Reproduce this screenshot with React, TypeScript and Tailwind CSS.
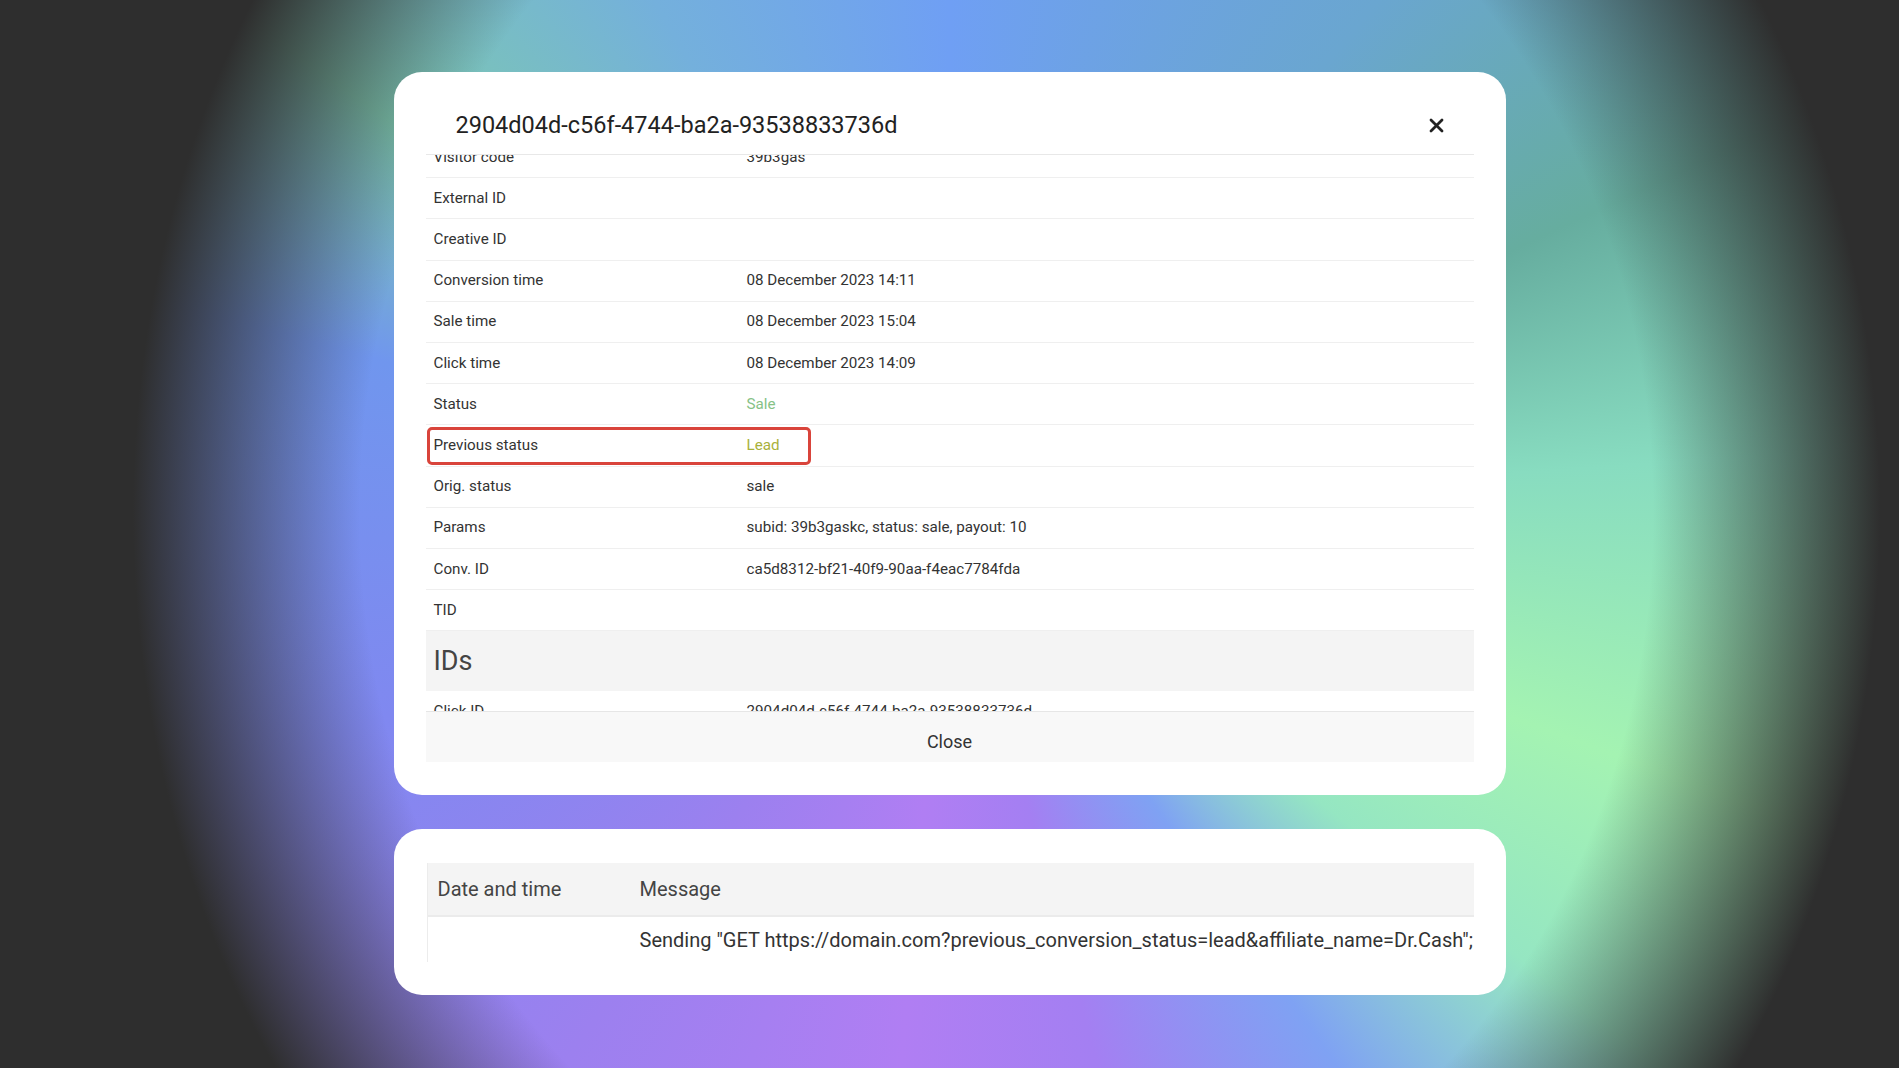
import React from 'react';

type Row = {
  label: string;
  value?: string;
  tone?: 'sale' | 'lead';
  marked?: boolean;
};

const rows: Row[] = [
  { label: 'Visitor code', value: '39b3gas' },
  { label: 'External ID' },
  { label: 'Creative ID' },
  { label: 'Conversion time', value: '08 December 2023 14:11' },
  { label: 'Sale time', value: '08 December 2023 15:04' },
  { label: 'Click time', value: '08 December 2023 14:09' },
  { label: 'Status', value: 'Sale', tone: 'sale' },
  { label: 'Previous status', value: 'Lead', tone: 'lead', marked: true },
  { label: 'Orig. status', value: 'sale' },
  { label: 'Params', value: 'subid: 39b3gaskc, status: sale, payout: 10' },
  { label: 'Conv. ID', value: 'ca5d8312-bf21-40f9-90aa-f4eac7784fda' },
  { label: 'TID' },
];

function DetailRow({ row }: { row: Row }) {
  const toneClass =
    row.tone === 'sale' ? 'text-[#86c286]' : row.tone === 'lead' ? 'text-[#a9b13b]' : 'text-[#333]';

  return (
    <div className="relative flex items-center h-[41.2px] border-b border-[#efefef] text-[15.2px] text-[#333]">
      <div className="w-[321px] shrink-0 pl-[8px]">{row.label}</div>
      <div className={toneClass}>{row.value}</div>
      {/* highlight frame around the changed status */}
      {row.marked && (
        <div className="absolute left-[1px] top-[2px] w-[384px] h-[38px] border-[3px] border-[#d9443b] rounded-[5px]" />
      )}
    </div>
  );
}

function CloseIcon() {
  return (
    <svg width="15" height="15" viewBox="0 0 15 15" fill="none">
      <path d="M2 2 L13 13 M13 2 L2 13" stroke="#222" strokeWidth="2.8" strokeLinecap="round" />
    </svg>
  );
}

export default function App() {
  return (
    <div className="w-[1899px] h-[1068px] overflow-hidden bg-[#2e2e2e] bg-[radial-gradient(ellipse_46%_95%_at_53%_48%,transparent_74%,#2e2e2e_100%),conic-gradient(from_0deg_at_50%_48%,#6f9ff4_0deg,#6aa6d0_40deg,#66ad9f_65deg,#88dcc0_86deg,#a4f3b2_110deg,#95e6c2_128deg,#7fa2f3_145deg,#a47ff2_165deg,#b07ef3_185deg,#9c80ef_215deg,#8088f0_250deg,#7096ee_285deg,#7cc8b0_305deg,#74b0dc_330deg,#6f9ff4_360deg)] font-['Roboto',sans-serif]">
      <div className="flex flex-col items-center pt-[72px]">
        {/* Conversion details modal */}
        <div className="w-[1112px] bg-white rounded-[28px] px-[32px] pb-[33px]">
          <div className="flex items-center justify-between pt-[40px] pb-[16px] border-b border-[#e8e8e8]">
            <h2 className="pl-[30px] text-[23.5px] leading-[26px] text-[#222]">2904d04d-c56f-4744-ba2a-93538833736d</h2>
            <div className="pr-[30px]">
              <CloseIcon />
            </div>
          </div>

          <div className="h-[556px] overflow-hidden">
            <div className="-mt-[18px]">
              {rows.map((row) => (
                <DetailRow key={row.label} row={row} />
              ))}
              <div className="h-[60px] flex items-center bg-[#f4f4f4] pl-[8px] text-[27px] text-[#444]">IDs</div>
              <div className="flex items-center h-[41.2px] text-[15.2px] text-[#333]">
                <div className="w-[321px] shrink-0 pl-[8px]">Click ID</div>
                <div>2904d04d-c56f-4744-ba2a-93538833736d</div>
              </div>
            </div>
          </div>

          <div className="h-[51px] flex items-center justify-center pt-[8px] bg-[#f8f8f8] border-t border-[#e6e6e6] text-[18px] text-[#333]">
            Close
          </div>
        </div>

        {/* Postback log */}
        <div className="w-[1112px] h-[166px] mt-[34px] bg-white rounded-[28px] px-[32px] pt-[34px] overflow-hidden">
          <div className="ml-[1px] border-l border-[#ececec] overflow-hidden">
            <div className="flex items-center h-[54px] bg-[#f4f4f4] border-b-2 border-[#ebebeb] text-[20px] text-[#444]">
              <div className="w-[202px] shrink-0 pl-[10px]">Date and time</div>
              <div className="pl-[10px]">Message</div>
            </div>
            <div className="flex items-center h-[45px] text-[20px] text-[#333] whitespace-nowrap">
              <div className="w-[202px] shrink-0" />
              <div className="pl-[10px]">Sending "GET https://domain.com?previous_conversion_status=lead&amp;affiliate_name=Dr.Cash";</div>
            </div>
          </div>
        </div>
      </div>
    </div>
  );
}
